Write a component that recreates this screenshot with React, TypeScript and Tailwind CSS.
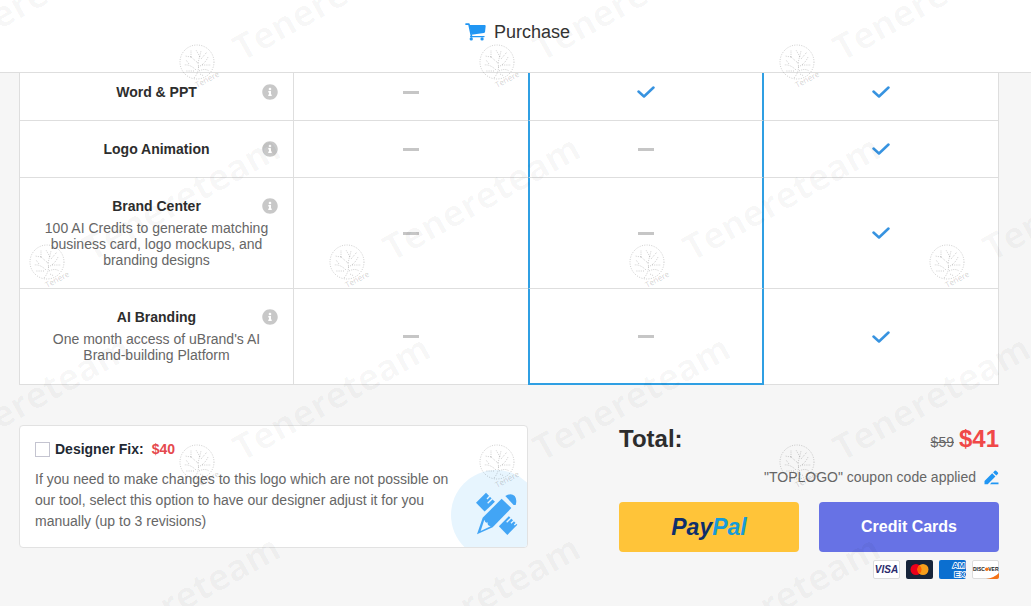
import { useState } from 'react'
import { FaInfoCircle } from 'react-icons/fa'

type Feature = {
  name: string
  description?: string
  plans: boolean[]
}

const features: Feature[] = [
  { name: 'Word & PPT', plans: [false, true, true] },
  { name: 'Logo Animation', plans: [false, false, true] },
  {
    name: 'Brand Center',
    description:
      '100 AI Credits to generate matching business card, logo mockups, and branding designs',
    plans: [false, false, true],
  },
  {
    name: 'AI Branding',
    description: "One month access of uBrand's AI Brand-building Platform",
    plans: [false, false, true],
  },
]

const HIGHLIGHTED_PLAN = 1

// Emblems repeat every 300px, odd rows are shifted by half a step
const watermarks = [0, 1, 2, 3].flatMap((row) =>
  [0, 1, 2, 3, 4].map((col) => ({
    x: col * 300 + (row % 2 ? 47 : 197) - 300,
    y: row * 200 + 62,
  })),
)

function CartIcon() {
  return (
    <svg className="w-[21px] h-[18px]" viewBox="0 0 64 54" aria-hidden="true">
      <path
        d="M3 3H12L20 41"
        fill="none"
        stroke="#2196f3"
        strokeWidth="5"
        strokeLinecap="round"
        strokeLinejoin="round"
      />
      <path d="M17 41H58" stroke="#2196f3" strokeWidth="4" strokeLinecap="round" />
      <path d="M13 6H60Q63 6 63 9L61 27Q60 30 57 30L20 35Z" fill="#2196f3" />
      <circle cx="19" cy="48" r="5" fill="#2196f3" />
      <circle cx="52" cy="48" r="5" fill="#2196f3" />
    </svg>
  )
}

function CheckIcon() {
  return (
    <svg
      className="mx-auto w-[18px] h-3"
      viewBox="0 0 18 12"
      role="img"
      aria-label="Included"
    >
      <path
        d="M1.5 5.5L7 10.5L16.5 1.5"
        fill="none"
        stroke="#3793e0"
        strokeWidth="2.5"
        strokeLinecap="round"
        strokeLinejoin="round"
      />
    </svg>
  )
}

function EditIcon() {
  return (
    <svg className="w-[15px] h-[15px]" viewBox="0 0 15 15" aria-hidden="true">
      <path
        d="M.5 14.2V11L8.2 3.3L11.4 6.5L3.7 14.2ZM9.1 2.4L10.7 .8Q11.4 .2 12.1 .8L13.9 2.6Q14.5 3.3 13.9 4L12.3 5.6ZM7.5 12.6H14.5V14.2H6Z"
        fill="#2196f3"
      />
    </svg>
  )
}

function DesignerArt() {
  return (
    <svg
      className="absolute right-0 bottom-0 w-[76px] h-[77px]"
      viewBox="33 15 228 231"
      aria-hidden="true"
    >
      <circle cx="168" cy="150" r="135" fill="#e7f5fe" />
      <path d="M108 113L138 83L232 179L202 210Z" fill="#42a5f5" />
      <path
        d="M152 91L141 102M159 99L143 115M170 109L159 120M207 147L196 158M216 156L200 172M223 165L213 175M230 173L223 180"
        stroke="#e7f5fe"
        strokeWidth="4"
      />
      <path
        d="M194 84L235 125L160 201L96 220L116 156Z"
        fill="#e7f5fe"
      />
      <path d="M185 101L214 129L158 187L111 208L128 158Z" fill="#42a5f5" />
      <path
        d="M133 164Q136 176 143 172Q141 182 152 184L122 198Z"
        fill="#e7f5fe"
      />
      <path
        d="M196 93Q213 82 224 93Q232 103 227 120L221 120Z"
        fill="#42a5f5"
      />
    </svg>
  )
}

function CardLogos() {
  const frame = 'w-[27px] h-[19px]'
  return (
    <div className="mt-2 flex justify-end gap-1.5">
      <svg className={frame} viewBox="0 0 27 19" role="img" aria-label="Visa">
        <rect x=".5" y=".5" width="26" height="18" rx="1.5" fill="#fff" stroke="#dcdcdc" />
        <text
          x="13.5"
          y="13"
          textAnchor="middle"
          fontFamily="Liberation Sans, sans-serif"
          fontSize="10"
          fontWeight="700"
          fontStyle="italic"
          fill="#2a2a6c"
        >
          VISA
        </text>
      </svg>
      <svg className={frame} viewBox="0 0 27 19" role="img" aria-label="Mastercard">
        <rect width="27" height="19" rx="2" fill="#16243a" />
        <circle cx="10" cy="9.5" r="5.5" fill="#eb001b" />
        <circle cx="17" cy="9.5" r="5.5" fill="#f79e1b" />
        <path d="M13.5 5.2A5.5 5.5 0 0 1 13.5 13.8A5.5 5.5 0 0 1 13.5 5.2Z" fill="#ff5f00" />
      </svg>
      <svg className={frame} viewBox="0 0 27 19" role="img" aria-label="American Express">
        <rect width="27" height="19" rx="2" fill="#0b6fd0" />
        <g
          fontFamily="Liberation Sans, sans-serif"
          fontSize="8"
          fontWeight="700"
          fill="#0b6fd0"
          stroke="#fff"
          strokeWidth="1.6"
          paintOrder="stroke"
          textAnchor="end"
        >
          <text x="26" y="8">AM</text>
          <text x="26" y="17">EX</text>
        </g>
      </svg>
      <svg className={frame} viewBox="0 0 27 19" role="img" aria-label="Discover">
        <rect x=".5" y=".5" width="26" height="18" rx="1.5" fill="#fff" stroke="#dcdcdc" />
        <path d="M27 13V17Q27 19 25 19H14Q22 18 27 13Z" fill="#f47216" />
        <g
          fontFamily="Liberation Sans, sans-serif"
          fontSize="5"
          fontWeight="700"
          fill="#222"
        >
          <text x="1" y="11">DISC</text>
          <text x="26.5" y="11" textAnchor="end">VER</text>
        </g>
        <circle cx="14.8" cy="9.2" r="1.8" fill="#f47216" />
      </svg>
    </div>
  )
}

function Watermark() {
  return (
    <svg
      className="absolute inset-0 z-20 size-full pointer-events-none"
      aria-hidden="true"
    >
      {watermarks.map(({ x, y }) => (
        <g key={`${x}-${y}`} transform={`translate(${x},${y})`}>
          <g fill="none" stroke="#000" strokeOpacity=".2" strokeWidth="1">
            <circle r="17" strokeDasharray="1 1.4" />
            <path
              d="M-3 16Q3 9 1 1L-6 -5M1 1L4 -11M1 5Q8 2 11 -5M-1 8Q-7 2 -13 3M-6 -5L-12 -6M-6 -5L-6 -12M3 -5L-1 -12M4 -3L10 -10M5 3L14 3M2 9Q8 6 12 9M-3 9L-11 9M3 12L7 14M-8 2L-11 -2"
              strokeDasharray="1 1.2"
            />
          </g>
          <text
            transform="translate(0,26) rotate(-28)"
            fontFamily="Open Sans, sans-serif"
            fontSize="8"
            fillOpacity=".2"
          >
            Tenere
          </text>
          <text
            transform="translate(45,0) rotate(-29)"
            fontFamily="Open Sans, sans-serif"
            fontSize="36"
            fontWeight="700"
            fill="#000"
            fillOpacity=".03"
          >
            Tenereteam
          </text>
        </g>
      ))}
    </svg>
  )
}

function FeatureRow({ name, description, plans }: Feature) {
  return (
    <tr className="group">
      <th
        scope="row"
        className="border-x border-b border-[#dedede] px-[15px] py-5 group-last:pb-[21px] align-top font-normal"
      >
        <div className="flex items-center">
          <span className="grow pl-4 font-bold leading-4 text-[#2d2d2d]">
            {name}
          </span>
          <button type="button" aria-label={`About ${name}`}>
            <FaInfoCircle className="size-4 text-[#c8c8c8]" />
          </button>
        </div>
        {description && (
          <p className="mt-1.5 px-2 leading-4 text-[#666]">{description}</p>
        )}
      </th>
      {plans.map((included, i) => (
        <td
          key={i}
          className={
            i === HIGHLIGHTED_PLAN
              ? 'border-x-2 border-b border-x-[#2f9fe3] border-b-[#dedede] group-last:border-b-2 group-last:border-b-[#2f9fe3]'
              : 'border-b border-[#dedede] last:border-r'
          }
        >
          {included ? (
            <CheckIcon />
          ) : (
            <div
              role="img"
              aria-label="Not included"
              className="mx-auto w-4 h-[3px] bg-[#c6c6c6]"
            />
          )}
        </td>
      ))}
    </tr>
  )
}

export default function App() {
  const [designerFix, setDesignerFix] = useState(false)

  return (
    <div className="relative min-h-screen overflow-hidden bg-[#f6f6f6] font-['Liberation_Sans',Arial,sans-serif] text-sm text-[#666]">
      <header className="relative z-10 h-[73px] pl-1 pb-2 flex items-center justify-center gap-2 bg-white border-b border-[#dedede]">
        <CartIcon />
        <h1 className="text-lg text-[#333]">Purchase</h1>
      </header>

      <main className="pl-[19px] pr-8 pb-6">
        <table className="-mt-[9px] w-full table-fixed border-separate border-spacing-0 bg-white text-center">
          <colgroup>
            <col className="w-[275px]" />
            <col className="w-[234px]" />
            <col />
            <col />
          </colgroup>
          <tbody>
            {features.map((feature) => (
              <FeatureRow key={feature.name} {...feature} />
            ))}
          </tbody>
        </table>

        <div className="mt-10 flex items-start gap-[91px]">
          <section className="relative flex-1 overflow-hidden rounded border border-[#e2e2e2] bg-white p-[15px]">
            <DesignerArt />
            <label className="relative flex items-center leading-4 font-bold text-[#1f2933]">
              <input
                type="checkbox"
                className="mr-[5px] size-[15px] appearance-none border border-[#c4c4d0] bg-white checked:bg-[#2196f3]"
                checked={designerFix}
                onChange={(e) => setDesignerFix(e.target.checked)}
              />
              Designer Fix:
              <span className="ml-2 text-[#e5484d]">$40</span>
            </label>
            <p className="relative mt-3 pr-14 leading-[21px]">
              If you need to make changes to this logo which are not possible on
              our tool, select this option to have our designer adjust it for you
              manually (up to 3 revisions)
            </p>
          </section>

          <section className="w-95">
            <div className="flex items-baseline text-2xl leading-7 font-bold">
              <h2 className="grow text-[#2d2d2d]">Total:</h2>
              <s className="mr-[5px] text-sm font-normal">$59</s>
              <span className="text-[#f04848]">$41</span>
            </div>
            <div className="mt-3.5 flex items-center justify-end gap-2 leading-[21px]">
              <span>"TOPLOGO" coupon code applied</span>
              <button type="button" aria-label="Edit coupon code">
                <EditIcon />
              </button>
            </div>
            <div className="mt-3.5 flex gap-5">
              <button
                type="button"
                className="h-[50px] flex-1 rounded bg-[#ffc439] text-[23px] font-bold italic text-[#0f2f6b]"
              >
                Pay<span className="text-[#179bd7]">Pal</span>
              </button>
              <button
                type="button"
                className="h-[50px] flex-1 rounded bg-[#6772e5] text-base font-bold text-white"
              >
                Credit Cards
              </button>
            </div>
            <CardLogos />
          </section>
        </div>
      </main>

      <Watermark />
    </div>
  )
}
